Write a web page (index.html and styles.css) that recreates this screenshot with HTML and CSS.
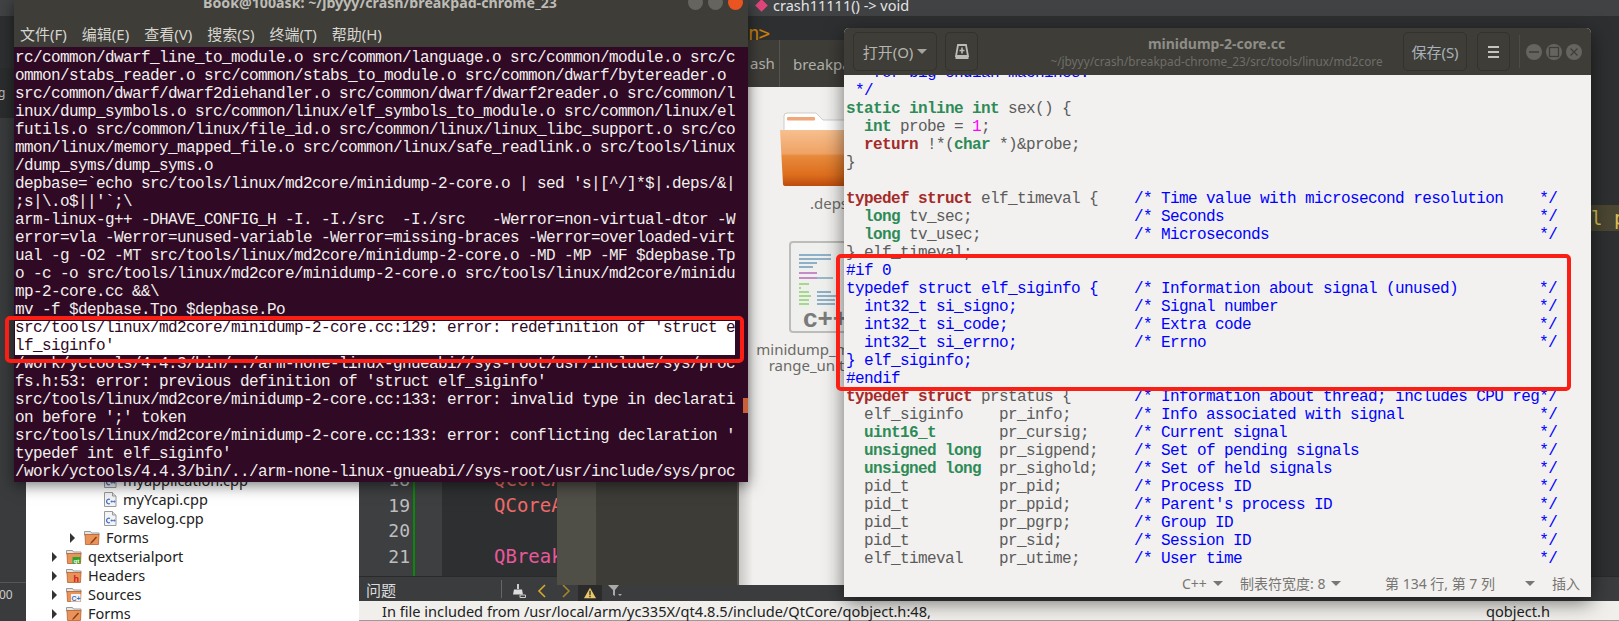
FILE: index.html
```html
<!DOCTYPE html>
<html lang="zh">
<head>
<meta charset="utf-8">
<title>crash</title>
<link rel="stylesheet" href="styles.css">
</head>
<body>
<svg class="defs" width="0" height="0" aria-hidden="true">
  <symbol id="cfile" viewBox="0 0 14 15">
    <path d="M1.5.5h8l3.5 3.500v10.500h-11.500z" fill="#f4f4f6" stroke="#9a9a9a"/>
    <path d="M9.500.5v3.500h3.500" fill="#ddd" stroke="#9a9a9a"/>
    <path d="M7 7.500a2.300 2.300 0 1 0 0 4" fill="none" stroke="#3d6fc0" stroke-width="1.200"/>
    <path d="M7.500 9.500h2.500M8.800 8.300v2.500M10 9.500h2.500M11.300 8.300v2.500" stroke="#3d6fc0" stroke-width=".8"/>
  </symbol>
  <symbol id="folder" viewBox="0 0 16 15">
    <path d="M.5 1.500h6l1 1.500h7.500v2h-14.500z" fill="#e6e6e6" stroke="#999"/>
    <path d="M1 4.500h14l-.5 10h-13z" fill="#e8935a" stroke="#b9602c" stroke-width=".8"/>
  </symbol>
</svg>

<div class="ide">
  <aside class="rail">
    <div class="rail-top"></div>
    <div class="rail-dark"></div>
    <div class="rail-darker"><span>g</span></div>
    <div class="rail-fill"></div>
    <div class="rail-foot">00</div>
  </aside>

  <nav class="tree">
    <div class="row lv2"><svg class="ic-file"><use href="#cfile"/></svg>myapplication.cpp</div>
    <div class="row lv2"><svg class="ic-file"><use href="#cfile"/></svg>myYcapi.cpp</div>
    <div class="row lv2"><svg class="ic-file"><use href="#cfile"/></svg>savelog.cpp</div>
    <div class="row lv1"><i class="tri"></i><svg class="ic-folder" viewBox="0 0 16 15"><use href="#folder"/><path d="M12 6.500l-5 5.500-1 2 2-1 5-5.500z" fill="#8a3a10"/></svg>Forms</div>
    <div class="row lv0"><i class="tri"></i><svg class="ic-folder" viewBox="0 0 16 15"><use href="#folder"/><rect x="6.500" y="8" width="8" height="6.500" fill="#2aa52a"/><text x="7.500" y="13.500" class="mini">qt</text></svg>qextserialport</div>
    <div class="row lv0"><i class="tri"></i><svg class="ic-folder" viewBox="0 0 16 15"><use href="#folder"/><text x="7.500" y="14" class="mini-h">h</text></svg>Headers</div>
    <div class="row lv0"><i class="tri"></i><svg class="ic-folder" viewBox="0 0 16 15"><use href="#folder"/><rect x="5" y="7" width="9.500" height="7.500" fill="#f4f4f6"/><text x="5.500" y="13.500" class="mini-c">C+</text></svg>Sources</div>
    <div class="row lv0"><i class="tri"></i><svg class="ic-folder" viewBox="0 0 16 15"><use href="#folder"/><path d="M12 6.500l-5 5.500-1 2 2-1 5-5.500z" fill="#8a3a10"/></svg>Forms</div>
  </nav>

  <main class="work">
    <div class="crumbs"><i class="diamond"></i><span>crash11111() -&gt; void</span></div>
    <div class="scope">n&gt;</div>
    <div class="editor">
      <div class="gutter">
        <div class="num">18</div><div class="num">19</div><div class="num">20</div><div class="num">21</div>
      </div>
      <div class="change"></div>
      <div class="fold"></div>
      <div class="code">
        <div class="ln red">QCoreApplication</div>
        <div class="ln red">QCoreApplication</div>
        <div class="ln">&nbsp;</div>
        <div class="ln pink">QBreakpad</div>
      </div>
      <div class="hit">l p</div>
    </div>
    <div class="issues">
      <span class="issues-title">问题</span>
      <i class="vsep"></i>
      <svg class="tool broom" width="14" height="14" viewBox="0 0 14 14"><path d="M5 0h2v5H5z" fill="#ccc"/><path d="M2 5.500h8l1 5H1z" fill="#ddd"/><path d="M8 11h5.500v2.500H8z" fill="none" stroke="#ccc"/></svg>
      <svg class="tool back" width="12" height="16" viewBox="0 0 12 16"><path d="M9 2L3 8l6 6" fill="none" stroke="#d9a92c" stroke-width="1.600"/></svg>
      <svg class="tool next" width="12" height="16" viewBox="0 0 12 16"><path d="M3 2l6 6-6 6" fill="none" stroke="#a5852a" stroke-width="1.600"/></svg>
      <span class="warn"><svg width="14" height="12" viewBox="0 0 16 14"><path d="M8 1l7 12H1z" fill="#e8c868"/><path d="M7.200 4.500h1.600v5H7.200zM7.200 10.500h1.600V12H7.200z" fill="#333"/></svg></span>
      <svg class="tool filt" width="14" height="12" viewBox="0 0 14 12"><path d="M0 0h11L7 5v6L5 10V5z" fill="#aaa"/><path d="M10 9h4l-2 2z" fill="#aaa"/></svg>
    </div>
    <div class="status"><span>In file included from /usr/local/arm/yc335X/qt4.8.5/include/QtCore/qobject.h:48,</span><span>qobject.h</span></div>
  </main>
</div>

<section class="files">
  <div class="tabs"><span class="tab-a">ash</span><span class="tab-b">breakpad-chrome_23</span></div>
  <div class="files-body">
    <div class="side-a"></div>
    <div class="side-b"></div>
    <div class="grid">
      <div class="item">
        <svg class="big-folder" width="88" height="75" viewBox="0 0 88 75">
          <defs>
            <linearGradient id="fg" x1="0" y1="0" x2="0" y2="1"><stop offset="0" stop-color="#f6c08f"/><stop offset=".42" stop-color="#f0a265"/><stop offset=".46" stop-color="#e88a3c"/><stop offset=".8" stop-color="#dd6e1e"/><stop offset="1" stop-color="#bd4c0d"/></linearGradient>
          </defs>
          <path d="M4 22V4q0-3 3-3h29l7 7h40v14z" fill="#fff" stroke="#cfcdc9"/>
          <rect x="7" y="5" width="28" height="3.500" rx="1" fill="#f0a878"/>
          <path d="M0 18h88l-4 54q0 2-3 2H6q-3 0-3-2z" fill="url(#fg)"/>
        </svg>
        <div class="label">.deps</div>
      </div>
      <div class="item second">
        <svg class="cpp" width="70" height="92" viewBox="0 0 70 92">
          <rect x="1" y="1" width="68" height="90" rx="3" fill="#efefed" stroke="#bcbcba" stroke-width="2"/>
          <g class="blocks">
            <path d="M10 14h32M10 18h32M10 22h18M10 26h14" stroke="#8db0c8"/>
            <path d="M10 32h18M10 37h18" stroke="#c58bc8"/><path d="M28 37h16" stroke="#8db0c8"/>
            <path d="M10 43h10M10 47h2M10 51h10M10 55h12M10 59h10M10 63h10" stroke="#a4d88a"/>
            <path d="M28 51h14M28 55h20M28 59h18M28 63h18" stroke="#8db0c8"/>
          </g>
          <text x="14" y="86" class="cpp-t">c++</text>
        </svg>
        <div class="label">minidump_memory_<br>range_unittest.cc</div>
      </div>
    </div>
  </div>
</section>

<section class="term">
  <header class="term-title"><span>Book@100ask: ~/jbyyy/crash/breakpad-chrome_23</span>
    <div class="term-btns"><i></i><i></i><i class="close"></i></div>
  </header>
  <div class="term-menu"><span>文件(F)</span><span>编辑(E)</span><span>查看(V)</span><span>搜索(S)</span><span>终端(T)</span><span>帮助(H)</span></div>
  <div class="term-body"><pre class="term-text">rc/common/dwarf_line_to_module.o src/common/language.o src/common/module.o src/c
ommon/stabs_reader.o src/common/stabs_to_module.o src/common/dwarf/bytereader.o
src/common/dwarf/dwarf2diehandler.o src/common/dwarf/dwarf2reader.o src/common/l
inux/dump_symbols.o src/common/linux/elf_symbols_to_module.o src/common/linux/el
futils.o src/common/linux/file_id.o src/common/linux/linux_libc_support.o src/co
mmon/linux/memory_mapped_file.o src/common/linux/safe_readlink.o src/tools/linux
/dump_syms/dump_syms.o
depbase=`echo src/tools/linux/md2core/minidump-2-core.o | sed 's|[^/]*$|.deps/&amp;|
;s|\.o$||'`;\
arm-linux-g++ -DHAVE_CONFIG_H -I. -I./src  -I./src   -Werror=non-virtual-dtor -W
error=vla -Werror=unused-variable -Werror=missing-braces -Werror=overloaded-virt
ual -g -O2 -MT src/tools/linux/md2core/minidump-2-core.o -MD -MP -MF $depbase.Tp
o -c -o src/tools/linux/md2core/minidump-2-core.o src/tools/linux/md2core/minidu
mp-2-core.cc &amp;&amp;\
mv -f $depbase.Tpo $depbase.Po
<span class="sel">src/tools/linux/md2core/minidump-2-core.cc:129: error: redefinition of 'struct e
lf_siginfo'</span>/work/yctools/4.4.3/bin/../arm-none-linux-gnueabi//sys-root/usr/include/sys/proc
fs.h:53: error: previous definition of 'struct elf_siginfo'
src/tools/linux/md2core/minidump-2-core.cc:133: error: invalid type in declarati
on before ';' token
src/tools/linux/md2core/minidump-2-core.cc:133: error: conflicting declaration '
typedef int elf_siginfo'
/work/yctools/4.4.3/bin/../arm-none-linux-gnueabi//sys-root/usr/include/sys/proc</pre><i class="term-thumb"></i></div>
</section>

<section class="gedit">
  <header class="g-head">
    <button class="g-btn open">打开(O)<i class="caret"></i></button>
    <button class="g-btn pin"><svg width="18" height="18" viewBox="0 0 18 18"><path d="M5 2h8l2 11H3z" fill="none" stroke="#bdbcb6" stroke-width="1.800"/><path d="M9 4.500v6M6.500 7.500h5" stroke="#bdbcb6" stroke-width="1.600"/><rect x="2.500" y="13" width="13" height="3" fill="#bdbcb6"/></svg></button>
    <div class="g-title"><b>minidump-2-core.cc</b><small>~/jbyyy/crash/breakpad-chrome_23/src/tools/linux/md2core</small></div>
    <button class="g-btn save">保存(S)</button>
    <button class="g-btn menu"><i></i><i></i><i></i></button>
    <i class="g-sep"></i>
    <div class="g-win">
      <span><svg width="16" height="16" viewBox="0 0 16 16"><path d="M3 8h10" stroke="#3e3d38" stroke-width="1.500"/></svg></span>
      <span><svg width="16" height="16" viewBox="0 0 16 16"><rect x="3.500" y="3.500" width="9" height="9" fill="none" stroke="#3e3d38" stroke-width="1.300"/></svg></span>
      <span><svg width="16" height="16" viewBox="0 0 16 16"><path d="M4.500 4.500l7 7M11.500 4.500l-7 7" stroke="#3e3d38" stroke-width="1.200"/></svg></span>
    </div>
  </header>
  <div class="g-body"><pre class="g-text"><span class="c">   for big-endian machines:
 */</span>
<span class="t">static</span> <span class="t">inline</span> <span class="t">int</span> sex() {
  <span class="t">int</span> probe = <span class="n">1</span>;
  <span class="k">return</span> !*(<span class="t">char</span> *)&amp;probe;
}

<span class="k">typedef</span> <span class="k">struct</span> elf_timeval {    <span class="c">/* Time value with microsecond resolution    */</span>
  <span class="t">long</span> tv_sec;                  <span class="c">/* Seconds                                   */</span>
  <span class="t">long</span> tv_usec;                 <span class="c">/* Microseconds                              */</span>
} elf_timeval;
<span class="c">#if 0
typedef struct elf_siginfo {    /* Information about signal (unused)         */
  int32_t si_signo;             /* Signal number                             */
  int32_t si_code;              /* Extra code                                */
  int32_t si_errno;             /* Errno                                     */
} elf_siginfo;
#endif</span>
<span class="k">typedef</span> <span class="k">struct</span> prstatus {       <span class="c">/* Information about thread; includes CPU reg*/</span>
  elf_siginfo    pr_info;       <span class="c">/* Info associated with signal               */</span>
  <span class="t">uint16_t</span>       pr_cursig;     <span class="c">/* Current signal                            */</span>
  <span class="t">unsigned long</span>  pr_sigpend;    <span class="c">/* Set of pending signals                    */</span>
  <span class="t">unsigned long</span>  pr_sighold;    <span class="c">/* Set of held signals                       */</span>
  pid_t          pr_pid;        <span class="c">/* Process ID                                */</span>
  pid_t          pr_ppid;       <span class="c">/* Parent's process ID                       */</span>
  pid_t          pr_pgrp;       <span class="c">/* Group ID                                  */</span>
  pid_t          pr_sid;        <span class="c">/* Session ID                                */</span>
  elf_timeval    pr_utime;      <span class="c">/* User time                                 */</span></pre></div>
  <footer class="g-status">
    <span class="s-lang">C++<i class="caret"></i></span>
    <span class="s-tab">制表符宽度: 8<i class="caret"></i></span>
    <span class="s-pos">第 134 行, 第 7 列</span>
    <i class="caret s-car"></i>
    <span class="s-ins">插入</span>
  </footer>
</section>

<div class="mark mark-term"></div>
<div class="mark mark-code"></div>
</body>
</html>
```

FILE: styles.css
```css
* { box-sizing: border-box; }
html, body { margin: 0; padding: 0; }
body {
  position: relative;
  width: 1619px;
  height: 621px;
  overflow: hidden;
  background: #2e2f30;
  font-family: "Noto Sans", "Noto Sans CJK SC", sans-serif;
}
i { display: block; font-style: normal; }
pre { margin: 0; }
.defs { position: absolute; }

/* IDE behind everything */
.ide { display: flex; height: 621px; }
.rail { width: 26px; flex: none; display: flex; flex-direction: column; background: #3a3b3d; }
.rail-top { height: 16px; background: #404244; }
.rail-dark { height: 52px; background: #2e2f30; }
.rail-darker { height: 50px; background: #2b2c2d; color: #bbb; font-size: 12px; line-height: 50px; margin-left: -2px; }
.rail-fill { flex: 1; border-bottom: 1px solid #55575a; }
.rail-foot { height: 38px; padding-top: 3px; color: #ccc; font-size: 12px; line-height: 18px; margin-left: -1px; }

.tree {
  width: 333px; flex: none; background: #fff; color: #222;
  display: flex; flex-direction: column; justify-content: flex-end;
  margin-bottom: -2px; font-size: 14.500px;
}
.row { height: 19px; display: flex; align-items: center; line-height: 19px; flex: none; }
.lv2 { padding-left: 77px; }
.lv1 { padding-left: 44px; }
.lv0 { padding-left: 26px; }
.tri { width: 0; height: 0; border-left: 5px solid #333; border-top: 5px solid transparent; border-bottom: 5px solid transparent; margin-right: 9px; }
.ic-file { width: 14px; height: 15px; margin-right: 6px; }
.ic-folder { width: 16px; height: 15px; margin-right: 6px; }
.mini { font: bold 6px "Liberation Sans", sans-serif; fill: #fff; }
.mini-h { font: bold 9px "Liberation Sans", sans-serif; fill: #d01818; }
.mini-c { font: bold 7px "Liberation Sans", sans-serif; fill: #3d6fc0; }

.work { flex: 1; min-width: 0; display: flex; flex-direction: column; }
.crumbs { height: 16px; flex: none; background: #404244; display: flex; align-items: flex-start; padding-left: 398px; color: #e4e4e4; font-size: 14.500px; line-height: 10px; }
.diamond { width: 9px; height: 9px; margin: 1px 7px 0 0; background: #e0457b; transform: rotate(45deg); }
.scope { height: 24px; flex: none; padding-left: 389px; color: #c87f0a; font: 19px/34px "DejaVu Sans Mono", monospace; letter-spacing: -1px; }
.editor { flex: 1; display: flex; position: relative; min-height: 0; }
.gutter { width: 54px; flex: none; background: #3d3f41; display: flex; flex-direction: column; justify-content: flex-end; padding: 0 3px 7px 0; }
.num { height: 25.500px; text-align: right; color: #bebebe; font: 18px/25.500px "DejaVu Sans Mono", monospace; flex: none; }
.change { width: 2px; flex: none; background: #0a8a0a; }
.fold { width: 27px; flex: none; background: #3d3f41; }
.code { flex: 1; display: flex; flex-direction: column; justify-content: flex-end; padding: 0 0 7px 52px; font: 19px/25.500px "DejaVu Sans Mono", monospace; }
.ln { height: 25.500px; flex: none; }
.red { color: #ef6a6a; }
.pink { color: #e8589b; }
.hit { position: absolute; right: 0; top: 165px; width: 28px; height: 26px; background: #4a4632; color: #d6bf55; font: 19px/26px "DejaVu Sans Mono", monospace; white-space: pre; overflow: hidden; }

.issues { height: 25px; flex: none; background: #3a3c3e; border-top: 1px solid #2a2a2b; display: flex; align-items: center; color: #ddd; font-size: 15px; padding-left: 7px; }
.issues-title { width: 135px; flex: none; }
.vsep { width: 1px; height: 18px; background: #666; margin-right: 10px; }
.tool { flex: none; margin-top: 3px; }
.back { margin-left: 10px; }
.next { margin-left: 12px; }
.warn { width: 24px; height: 16px; margin: 8px 0 0 6px; background: #2b2b2b; display: flex; align-items: center; justify-content: center; flex: none; }
.filt { margin-left: 6px; }
.status { height: 20px; flex: none; background: #f0efeb; border-bottom: 1px solid #9a9a98; display: flex; justify-content: space-between; color: #222; font-size: 14.600px; line-height: 20px; padding: 0 69px 0 23px; }

/* file manager */
.files { position: absolute; left: 557px; top: 40px; width: 520px; height: 545px; display: flex; flex-direction: column; background: #f1f0ee; }
.tabs { height: 47px; flex: none; background: #3e3d38; display: flex; align-items: center; color: #b0afa9; font-size: 15px; padding-left: 188px; }
.tab-a { width: 35px; height: 47px; line-height: 47px; padding-left: 5px; border-right: 1px solid #55544e; margin-right: 13px; }
.files-body { flex: 1; display: flex; min-height: 0; }
.side-a { width: 39px; flex: none; background: #4f4e47; }
.side-b { width: 143px; flex: none; background: #3d3c37; border-right: 2px solid #55544e; }
.grid { flex: 1; padding-top: 25px; background: linear-gradient(90deg, #c8c7c5 0, #f1f0ee 14px); }
.item { width: 170px; display: flex; flex-direction: column; align-items: center; }
.second { margin-top: 30px; }
.big-folder { display: block; }
.label { color: #6b6a67; font-size: 15px; line-height: 16px; text-align: center; margin-top: 8px; padding-left: 10px; white-space: nowrap; }
.blocks path { stroke-width: 1.800; fill: none; }
.cpp-t { font: bold 26px "Liberation Sans", sans-serif; fill: #7a7a78; }

/* terminal */
.term { position: absolute; left: 14px; top: 0; width: 734px; height: 482px; background: #300a24; box-shadow: 0 3px 14px rgba(0,0,0,.55); display: flex; flex-direction: column; }
.term-title { height: 16px; flex: none; background: #3e3d38; display: flex; justify-content: center; color: #bdbcb6; font-size: 14.200px; font-weight: 700; line-height: 5px; position: relative; overflow: hidden; }
.term-title > span { margin-left: -2px; }
.term-btns { position: absolute; right: 5px; top: -5px; display: flex; gap: 5px; }
.term-btns i { width: 15px; height: 15px; border-radius: 50%; background: #65645f; }
.term-btns .close { background: #e95420; }
.term-menu { height: 31px; flex: none; background: #3e3d38; display: flex; gap: 15px; padding-left: 6px; color: #d6d5d0; font-size: 15px; line-height: 36px; }
.term-body { flex: 1; position: relative; overflow: hidden; padding: 2px 0 0 1px; }
.term-text { color: #f2efee; font: 16px/18px "Liberation Mono", monospace; letter-spacing: -0.6px; }
.sel { display: block; width: 720px; background: linear-gradient(#300a24 2px, #fff 2px); color: #300a24; }
.term-thumb { position: absolute; right: 0; top: 351px; width: 5px; height: 15px; background: #c8603a; }

/* gedit */
.gedit { position: absolute; left: 844px; top: 28px; width: 747px; height: 569px; background: #f2f1ef; border-radius: 5px 5px 0 0; box-shadow: 0 5px 20px rgba(0,0,0,.55); display: flex; flex-direction: column; overflow: hidden; }
.g-head { height: 47px; flex: none; background: #3e3d38; display: flex; align-items: center; padding-left: 9px; }
.g-btn { height: 39px; background: #3e3d38; border: 1px solid #33322d; border-radius: 5px; color: #b5b4ae; font: 15px "Noto Sans", "Noto Sans CJK SC", sans-serif; display: flex; align-items: center; justify-content: center; padding: 0; flex: none; }
.open { width: 84px; gap: 4px; margin-right: 8px; }
.pin { width: 33px; }
.caret { width: 0; height: 0; border-top: 5px solid #a5a49e; border-left: 5px solid transparent; border-right: 5px solid transparent; }
.g-title { flex: 1; min-width: 0; display: flex; flex-direction: column; align-items: center; padding-left: 52px; white-space: nowrap; }
.g-title b { color: #8e8d87; font-size: 14px; line-height: 18px; }
.g-title small { color: #6f6e68; font-size: 11.800px; line-height: 16px; }
.save { width: 64px; margin-right: 10px; color: #a9b2b8; }
.menu { width: 33px; flex-direction: column; gap: 3px; }
.menu i { width: 11px; height: 2px; background: #c4c3bd; }
.g-sep { width: 1px; height: 33px; background: #4c4b46; margin: 0 6px 0 9px; }
.g-win { display: flex; gap: 4px; padding-right: 9px; }
.g-win span { width: 16px; height: 16px; border-radius: 50%; background: #65645f; display: block; }
.g-win svg { display: block; }
.g-body { flex: 1; min-height: 0; overflow: hidden; padding-left: 2px; }
.g-text { margin-top: -11px; color: #5c5c5c; font: 16px/18px "Liberation Mono", monospace; letter-spacing: -0.6px; }
.t { color: #2e8b57; font-weight: 700; }
.k { color: #a52a2a; font-weight: 700; }
.c { color: #0000ff; }
.n { color: #ff00ff; }
.g-status { height: 27px; flex: none; display: flex; align-items: center; color: #777672; font-size: 14px; padding-left: 338px; padding-bottom: 1px; }
.g-status .caret { border-top-color: #777672; }
.s-lang { width: 58px; display: flex; align-items: center; gap: 6px; flex: none; }
.s-tab { width: 145px; display: flex; align-items: center; gap: 6px; flex: none; }
.s-pos { width: 140px; flex: none; }
.s-car { flex: none; margin-right: 17px; }
.s-ins { flex: none; }

/* red annotation boxes */
.mark { position: absolute; border: 4px solid #fa1e14; border-radius: 5px; pointer-events: none; }
.mark-term { left: 5px; top: 316px; width: 739px; height: 47px; }
.mark-code { left: 836px; top: 254px; width: 735px; height: 137px; }
```
